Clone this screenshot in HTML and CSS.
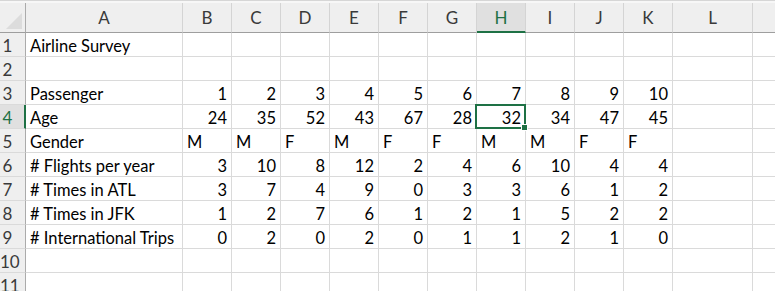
FILE: index.html
```html
<!DOCTYPE html>
<html lang="en">
<head>
  <meta charset="UTF-8" />
  <title>Airline Survey</title>
  <link rel="stylesheet" href="styles.css">
</head>
<body>
  <div class="sheet">
    <div class="top-strip"></div>

    <div class="row head-row">
      <div class="corner"><span class="corner-tri"></span></div>
      <div class="ch col-a">A</div>
      <div class="ch">B</div>
      <div class="ch">C</div>
      <div class="ch">D</div>
      <div class="ch">E</div>
      <div class="ch">F</div>
      <div class="ch">G</div>
      <div class="ch active">H</div>
      <div class="ch">I</div>
      <div class="ch">J</div>
      <div class="ch">K</div>
      <div class="ch col-l">L</div>
      <div class="ch col-m"></div>
    </div>

    <div class="row">
      <div class="rh">1</div>
      <div class="cell col-a">Airline Survey</div>
      <div class="cell"></div><div class="cell"></div><div class="cell"></div><div class="cell"></div><div class="cell"></div>
      <div class="cell"></div><div class="cell"></div><div class="cell"></div><div class="cell"></div><div class="cell"></div>
      <div class="cell col-l"></div><div class="cell col-m"></div>
    </div>

    <div class="row">
      <div class="rh">2</div>
      <div class="cell col-a"></div>
      <div class="cell"></div><div class="cell"></div><div class="cell"></div><div class="cell"></div><div class="cell"></div>
      <div class="cell"></div><div class="cell"></div><div class="cell"></div><div class="cell"></div><div class="cell"></div>
      <div class="cell col-l"></div><div class="cell col-m"></div>
    </div>

    <div class="row">
      <div class="rh">3</div>
      <div class="cell col-a">Passenger</div>
      <div class="cell num">1</div><div class="cell num">2</div><div class="cell num">3</div><div class="cell num">4</div><div class="cell num">5</div>
      <div class="cell num">6</div><div class="cell num">7</div><div class="cell num">8</div><div class="cell num">9</div><div class="cell num">10</div>
      <div class="cell col-l"></div><div class="cell col-m"></div>
    </div>

    <div class="row">
      <div class="rh active">4</div>
      <div class="cell col-a">Age</div>
      <div class="cell num">24</div><div class="cell num">35</div><div class="cell num">52</div><div class="cell num">43</div><div class="cell num">67</div>
      <div class="cell num">28</div>
      <div class="cell num selected">32<span class="sel-box"></span><span class="fill-handle"></span></div>
      <div class="cell num">34</div><div class="cell num">47</div><div class="cell num">45</div>
      <div class="cell col-l"></div><div class="cell col-m"></div>
    </div>

    <div class="row">
      <div class="rh">5</div>
      <div class="cell col-a">Gender</div>
      <div class="cell">M</div><div class="cell">M</div><div class="cell">F</div><div class="cell">M</div><div class="cell">F</div>
      <div class="cell">F</div><div class="cell">M</div><div class="cell">M</div><div class="cell">F</div><div class="cell">F</div>
      <div class="cell col-l"></div><div class="cell col-m"></div>
    </div>

    <div class="row">
      <div class="rh">6</div>
      <div class="cell col-a"># Flights per year</div>
      <div class="cell num">3</div><div class="cell num">10</div><div class="cell num">8</div><div class="cell num">12</div><div class="cell num">2</div>
      <div class="cell num">4</div><div class="cell num">6</div><div class="cell num">10</div><div class="cell num">4</div><div class="cell num">4</div>
      <div class="cell col-l"></div><div class="cell col-m"></div>
    </div>

    <div class="row">
      <div class="rh">7</div>
      <div class="cell col-a"># Times in ATL</div>
      <div class="cell num">3</div><div class="cell num">7</div><div class="cell num">4</div><div class="cell num">9</div><div class="cell num">0</div>
      <div class="cell num">3</div><div class="cell num">3</div><div class="cell num">6</div><div class="cell num">1</div><div class="cell num">2</div>
      <div class="cell col-l"></div><div class="cell col-m"></div>
    </div>

    <div class="row">
      <div class="rh">8</div>
      <div class="cell col-a"># Times in JFK</div>
      <div class="cell num">1</div><div class="cell num">2</div><div class="cell num">7</div><div class="cell num">6</div><div class="cell num">1</div>
      <div class="cell num">2</div><div class="cell num">1</div><div class="cell num">5</div><div class="cell num">2</div><div class="cell num">2</div>
      <div class="cell col-l"></div><div class="cell col-m"></div>
    </div>

    <div class="row">
      <div class="rh">9</div>
      <div class="cell col-a"># International Trips</div>
      <div class="cell num">0</div><div class="cell num">2</div><div class="cell num">0</div><div class="cell num">2</div><div class="cell num">0</div>
      <div class="cell num">1</div><div class="cell num">1</div><div class="cell num">2</div><div class="cell num">1</div><div class="cell num">0</div>
      <div class="cell col-l"></div><div class="cell col-m"></div>
    </div>

    <div class="row">
      <div class="rh">10</div>
      <div class="cell col-a"></div>
      <div class="cell"></div><div class="cell"></div><div class="cell"></div><div class="cell"></div><div class="cell"></div>
      <div class="cell"></div><div class="cell"></div><div class="cell"></div><div class="cell"></div><div class="cell"></div>
      <div class="cell col-l"></div><div class="cell col-m"></div>
    </div>

    <div class="row">
      <div class="rh">11</div>
      <div class="cell col-a"></div>
      <div class="cell"></div><div class="cell"></div><div class="cell"></div><div class="cell"></div><div class="cell"></div>
      <div class="cell"></div><div class="cell"></div><div class="cell"></div><div class="cell"></div><div class="cell"></div>
      <div class="cell col-l"></div><div class="cell col-m"></div>
    </div>
  </div>
</body>
</html>
```

FILE: styles.css
```css
html, body {
  margin: 0;
  padding: 0;
  background: #fff;
  overflow: hidden;
}

.sheet {
  width: 775px;
  height: 291px;
  overflow: hidden;
  font-family: Lato, "Liberation Sans", sans-serif;
  font-size: 16.5px;
  color: #000;
}

.top-strip {
  height: 2px;
  border-top: 1px solid #d6d6d6;
  background: #f7f7f7;
}

.row {
  display: flex;
  height: 24px;
}

.head-row {
  height: 30px;
}

/* base cell: width 49 incl. right border */
.cell, .ch {
  box-sizing: border-box;
  flex: 0 0 49px;
  width: 49px;
  border-right: 1px solid #dadada;
  border-bottom: 1px solid #dadada;
  padding: 3px 3px 0 4px;
  line-height: 20px;
  white-space: nowrap;
  overflow: visible;
}

.num {
  text-align: right;
  padding-right: 4px;
}

.col-a {
  flex-basis: 157px;
  width: 157px;
}

.col-l {
  flex-basis: 80px;
  width: 80px;
}

.col-m {
  flex-basis: 80px;
  width: 80px;
}

/* column headers */
.ch {
  background: #efefef;
  border-right: 1px solid #d4d4d4;
  border-bottom: 1px solid #9e9e9e;
  color: #3a3a3a;
  text-align: center;
  font-size: 17px;
  line-height: 28px;
  padding: 1px 0 0;
}

.ch.active {
  background: #e0e0e0;
  color: #1e7145;
  border-bottom: 2px solid #1e7145;
  line-height: 27px;
}

.corner {
  box-sizing: border-box;
  flex: 0 0 26px;
  width: 26px;
  background: #efefef;
  border-right: 1px solid #ababab;
  border-bottom: 1px solid #9e9e9e;
  position: relative;
}

.corner-tri {
  position: absolute;
  right: 3px;
  bottom: 3px;
  width: 0;
  height: 0;
  border-left: 16px solid transparent;
  border-bottom: 16px solid #dcdcdc;
}

/* row headers */
.rh {
  box-sizing: border-box;
  flex: 0 0 26px;
  width: 26px;
  background: #efefef;
  border-right: 1px solid #ababab;
  border-bottom: 1px solid #dadada;
  color: #3a3a3a;
  text-align: center;
  padding: 3px 10px 0 0;
  line-height: 20px;
  font-size: 17px;
  white-space: nowrap;
}

.rh.active {
  background: #e0e0e0;
  color: #1e7145;
  border-right: 2px solid #1e7145;
  padding-right: 9px;
}

/* selected cell H4 */
.selected {
  position: relative;
}

.sel-box {
  position: absolute;
  left: -2px;
  top: -1px;
  right: -1px;
  bottom: -1px;
  border: 2px solid #1e7145;
}

.fill-handle {
  position: absolute;
  right: -3px;
  bottom: -3px;
  width: 5px;
  height: 5px;
  background: #1e7145;
  border: 1px solid #fff;
}
```
